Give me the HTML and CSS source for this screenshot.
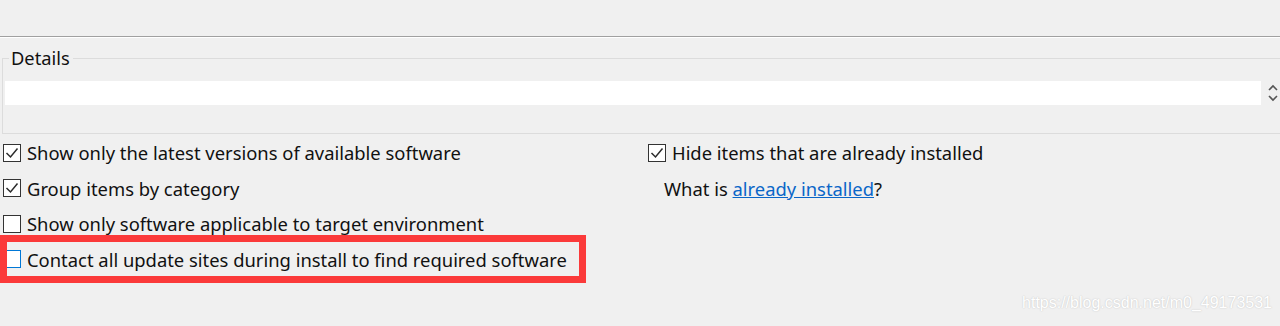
FILE: index.html
```html
<!DOCTYPE html>
<html>
<head>
<meta charset="utf-8">
<link rel="stylesheet" href="styles.css">
</head>
<body>
<div class="page">
  <div class="separator"></div>
  <div class="group">
    <div class="group-title"><span>Details</span></div>
    <div class="details-row">
      <div class="details-field"></div>
      <svg class="spinner" width="12" height="20" viewBox="0 0 12 20">
        <polyline points="2,7 6,3 10,7" fill="none" stroke="#555" stroke-width="1.6"/>
        <polyline points="2,13 6,17 10,13" fill="none" stroke="#555" stroke-width="1.6"/>
      </svg>
    </div>
  </div>
  <div class="options">
    <div class="col left">
      <div class="opt"><span class="box checked"><svg viewBox="0 0 16 16"><polyline points="2.5,8 6.5,12 13.5,3.5" fill="none" stroke="#2b2b2b" stroke-width="1.5"/></svg></span><span class="label">Show only the latest versions of available software</span></div>
      <div class="opt"><span class="box checked"><svg viewBox="0 0 16 16"><polyline points="2.5,8 6.5,12 13.5,3.5" fill="none" stroke="#2b2b2b" stroke-width="1.5"/></svg></span><span class="label">Group items by category</span></div>
      <div class="opt"><span class="box"></span><span class="label">Show only software applicable to target environment</span></div>
      <div class="opt"><span class="box focus"></span><span class="label">Contact all update sites during install to find required software</span></div>
    </div>
    <div class="col right">
      <div class="opt"><span class="box checked"><svg viewBox="0 0 16 16"><polyline points="2.5,8 6.5,12 13.5,3.5" fill="none" stroke="#2b2b2b" stroke-width="1.5"/></svg></span><span class="label">Hide items that are already installed</span></div>
      <div class="opt info"><span class="label">What is <a class="link" href="#">already installed</a>?</span></div>
    </div>
  </div>
  <div class="highlight"></div>
  <div class="watermark">https://blog.csdn.net/m0_49173531</div>
</div>
</body>
</html>
```

FILE: styles.css
```css
html, body {
  margin: 0;
  padding: 0;
  background: #f0f0f0;
}
.page {
  position: relative;
  width: 1280px;
  height: 326px;
  overflow: hidden;
  background: #f0f0f0;
  font-family: "Noto Sans", "Open Sans", sans-serif;
  color: #111;
}
.separator {
  margin-top: 36px;
  height: 0;
  border-top: 1px solid #a0a0a0;
  border-bottom: 1px solid #ffffff;
}
.group {
  margin-top: 20px;
  margin-left: 2px;
  height: 74px;
  border: 1px solid #dcdcdc;
  border-right: none;
}
.group-title {
  margin-top: -11px;
  margin-left: 6px;
  height: 20px;
  line-height: 20px;
  font-size: 18.3px;
}
.group-title span {
  background: #f0f0f0;
  padding: 0 3px 0 2px;
}
.details-row {
  display: flex;
  align-items: center;
  margin-top: 13px;
  margin-left: 2px;
  gap: 6px;
}
.details-field {
  width: 1256px;
  height: 24px;
  background: #ffffff;
  flex: none;
}
.spinner {
  flex: none;
}
.options {
  display: flex;
  margin-top: 1px;
}
.col {
  display: flex;
  flex-direction: column;
}
.col.left {
  width: 645px;
  padding-left: 3px;
}
.opt {
  height: 35.5px;
  display: flex;
  align-items: center;
  font-size: 18.4px;
}
.box {
  width: 18px;
  height: 18px;
  box-sizing: border-box;
  border: 1px solid #333;
  background: #ffffff;
  margin-right: 6px;
  flex: none;
  display: flex;
}
.box svg {
  width: 16px;
  height: 16px;
}
.box.focus {
  border-color: #0078d7;
}
.opt.info {
  padding-left: 16px;
}
.link {
  color: #0a66c8;
  text-decoration: underline;
}
.highlight {
  position: absolute;
  left: 0;
  top: 235px;
  width: 586px;
  height: 48px;
  box-sizing: border-box;
  border: 7px solid #fb3a3a;
}
.watermark {
  position: absolute;
  right: 8px;
  top: 294px;
  font-family: "Liberation Sans", Arial, sans-serif;
  font-size: 16px;
  color: #ffffff;
  text-shadow: 0 0 1px #c8c8c8, 0 0 2px #d8d8d8;
}
```
